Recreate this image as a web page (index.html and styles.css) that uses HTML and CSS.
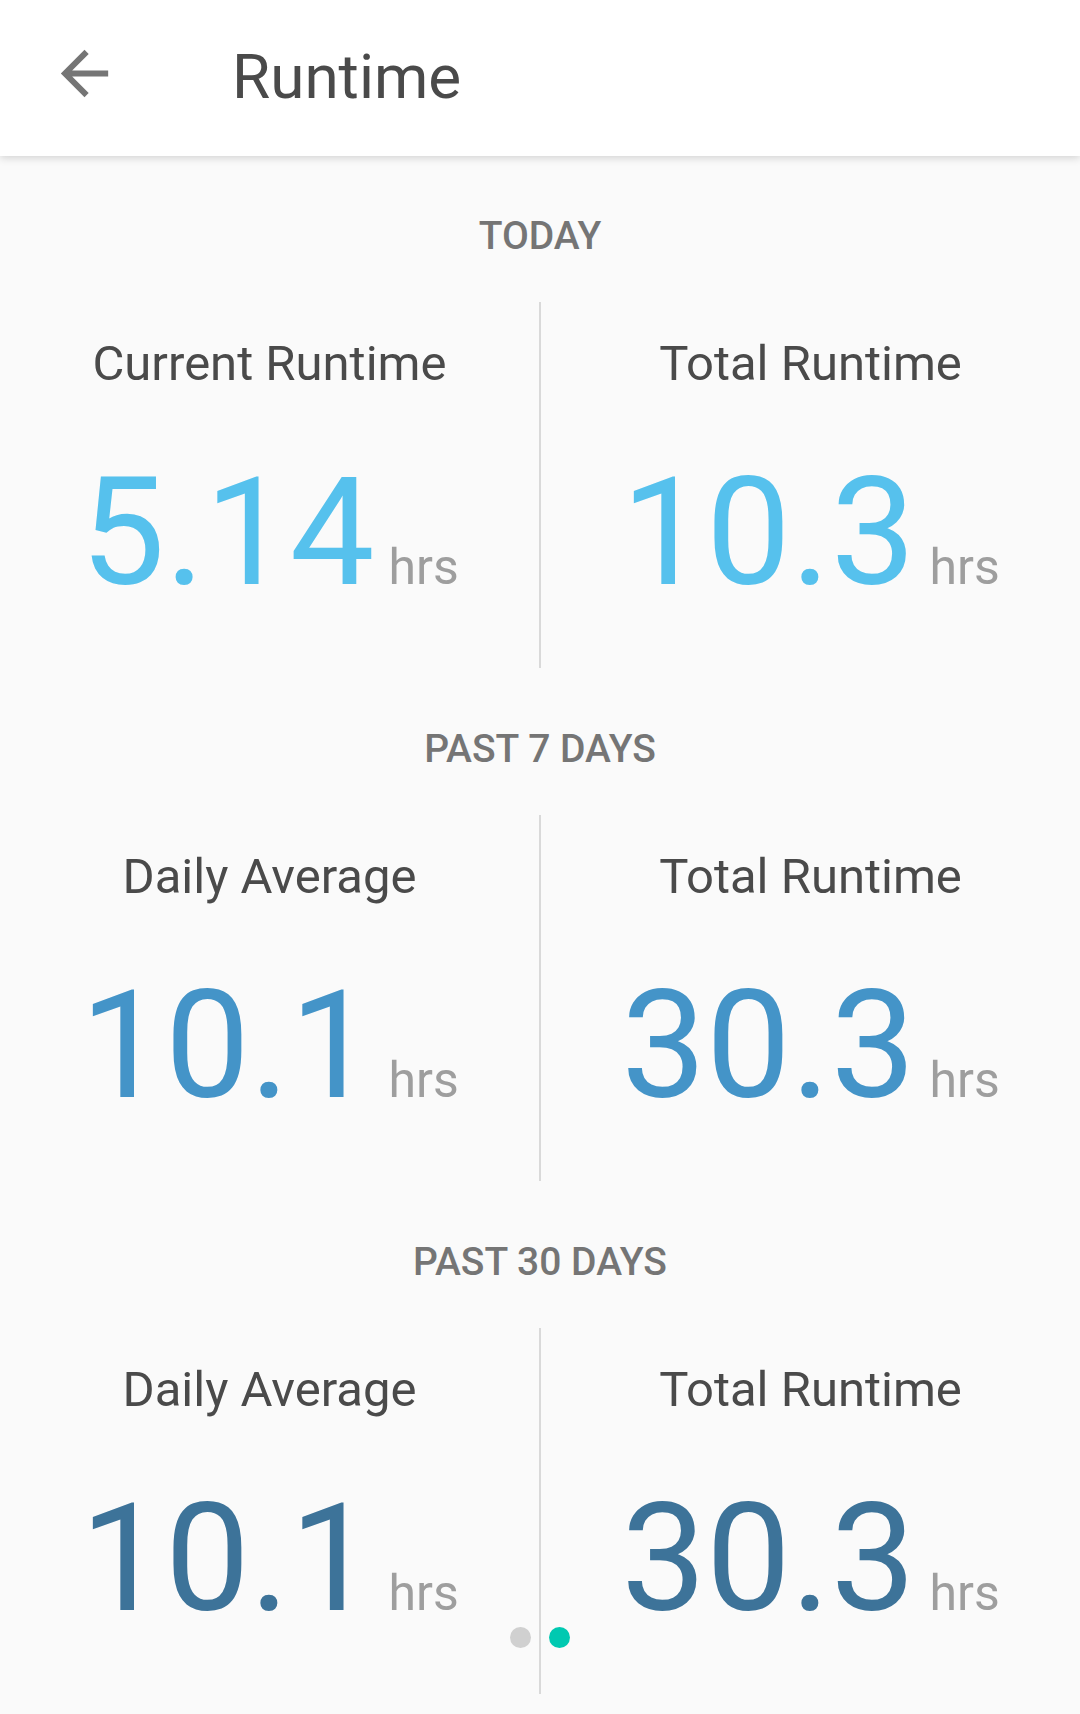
FILE: index.html
```html
<!DOCTYPE html>
<html lang="en">
<head>
    <meta charset="UTF-8">
    <meta name="viewport" content="width=device-width, initial-scale=1.0">
    <title>Runtime</title>
    <link rel="stylesheet" href="styles.css">
</head>
<body>
    <!-- Barra superior -->
    <header class="toolbar">
        <svg class="back" viewBox="0 0 24 24" width="71" height="71">
            <path d="M20 11H7.83l5.59-5.59L12 4l-8 8 8 8 1.41-1.41L7.83 13H20v-2z" fill="#757575"/>
        </svg>
        <h1 class="title">Runtime</h1>
    </header>

    <main class="content">
        <!-- Hoje -->
        <section class="period">
            <h2 class="period-label">TODAY</h2>
            <div class="stats">
                <div class="stat">
                    <div class="stat-label">Current Runtime</div>
                    <div class="stat-value"><span class="num today">5.14</span><span class="unit">hrs</span></div>
                </div>
                <div class="divider"></div>
                <div class="stat">
                    <div class="stat-label">Total Runtime</div>
                    <div class="stat-value"><span class="num today">10.3</span><span class="unit">hrs</span></div>
                </div>
            </div>
        </section>

        <!-- Últimos 7 dias -->
        <section class="period">
            <h2 class="period-label">PAST 7 DAYS</h2>
            <div class="stats">
                <div class="stat">
                    <div class="stat-label">Daily Average</div>
                    <div class="stat-value"><span class="num week">10.1</span><span class="unit">hrs</span></div>
                </div>
                <div class="divider"></div>
                <div class="stat">
                    <div class="stat-label">Total Runtime</div>
                    <div class="stat-value"><span class="num week">30.3</span><span class="unit">hrs</span></div>
                </div>
            </div>
        </section>

        <!-- Últimos 30 dias -->
        <section class="period">
            <h2 class="period-label">PAST 30 DAYS</h2>
            <div class="stats">
                <div class="stat">
                    <div class="stat-label">Daily Average</div>
                    <div class="stat-value"><span class="num month">10.1</span><span class="unit">hrs</span></div>
                </div>
                <div class="divider"></div>
                <div class="stat">
                    <div class="stat-label">Total Runtime</div>
                    <div class="stat-value"><span class="num month">30.3</span><span class="unit">hrs</span></div>
                </div>
            </div>
        </section>
    </main>

    <!-- Indicador de página -->
    <div class="pager">
        <span class="dot"></span>
        <span class="dot active"></span>
    </div>
</body>
</html>
```

FILE: styles.css
```css
/* Base */
body {
    font-family: Roboto, "Liberation Sans", sans-serif;
    margin: 0;
    padding: 0;
    background-color: #fafafa;
    color: #4a4a4a;
    min-height: 1714px;
}
h1, h2 {
    margin: 0;
    font-weight: normal;
}

/* Barra superior */
.toolbar {
    position: relative;
    z-index: 2;
    height: 156px;
    background: #fff;
    display: flex;
    align-items: center;
    padding-left: 49px;
    box-shadow: 0 2px 8px rgba(0, 0, 0, 0.16);
}
.back {
    display: block;
    margin-bottom: 9px;
}
.title {
    font-size: 62px;
    line-height: 64px;
    margin-left: 112px;
    margin-bottom: 3px;
    color: #4a4a4a;
}

/* Períodos */
.period {
    padding-top: 57px;
    padding-bottom: 1px;
}
.period-label {
    text-align: center;
    font-size: 39px;
    line-height: 46px;
    font-weight: 500;
    color: #757575;
}
.stats {
    display: grid;
    grid-template-columns: 539px 2px 1fr;
    height: 366px;
    margin-top: 43px;
}
.divider {
    background: #d9d9d9;
}
.stat {
    text-align: center;
}
.stat-label {
    padding-top: 32px;
    font-size: 49px;
    line-height: 60px;
    color: #4a4a4a;
}
.stat-value {
    margin-top: 59px;
    display: flex;
    justify-content: center;
    align-items: baseline;
}
.num {
    font-size: 151px;
    line-height: 160px;
}
.unit {
    font-size: 50px;
    color: #9e9e9e;
    margin-left: 14px;
}
.today {
    color: #56c1ed;
}
.week {
    color: #4494c8;
}
.month {
    color: #3d7399;
}

/* Indicador de página */
.pager {
    position: absolute;
    left: 510px;
    top: 1627px;
    display: flex;
    gap: 18px;
}
.dot {
    width: 21px;
    height: 21px;
    border-radius: 50%;
    background: #d0d0d0;
}
.dot.active {
    background: #00c9b1;
}
```
